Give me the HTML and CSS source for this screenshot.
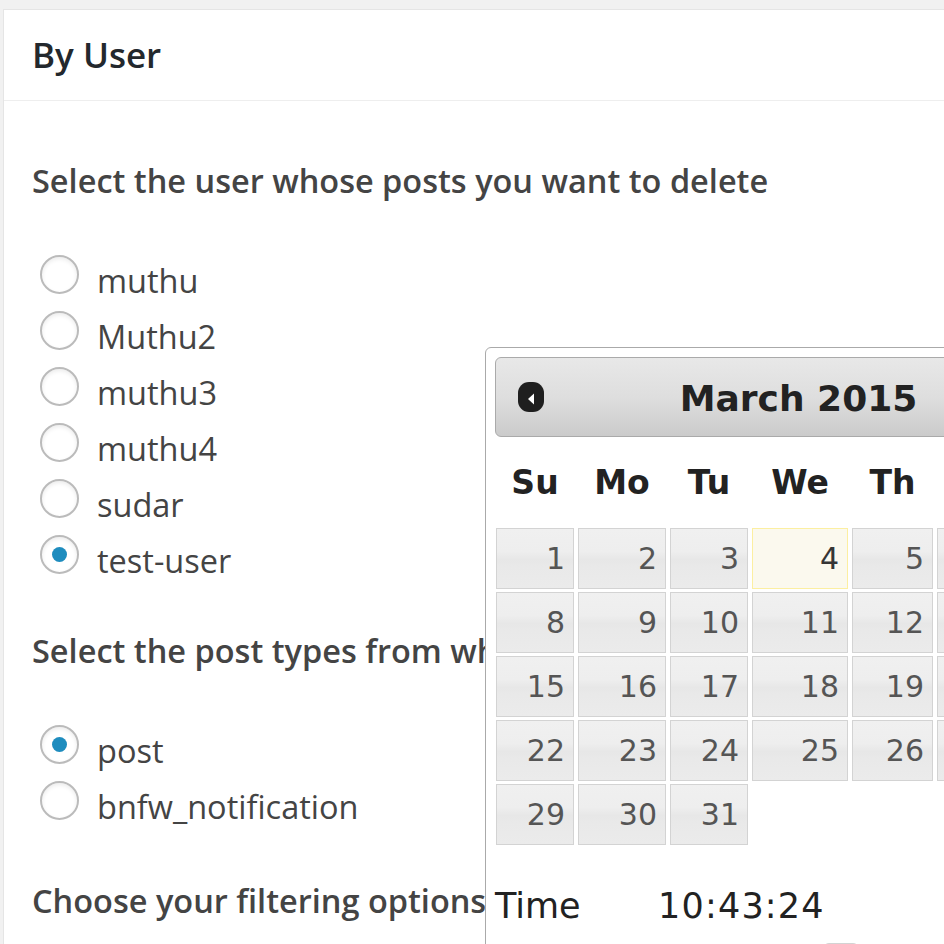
FILE: index.html
```html
<!DOCTYPE html>
<html lang="en">
<head>
<meta charset="UTF-8">
<title>Bulk Delete - By User</title>
<link rel="stylesheet" href="styles.css">
</head>
<body>

<div class="postbox">
  <h2 class="postbox-title">By User</h2>
  <div class="inside">
    <h4>Select the user whose posts you want to delete</h4>
    <div class="options">
      <label class="option"><input type="radio" name="user"> muthu</label>
      <label class="option"><input type="radio" name="user"> Muthu2</label>
      <label class="option"><input type="radio" name="user"> muthu3</label>
      <label class="option"><input type="radio" name="user"> muthu4</label>
      <label class="option"><input type="radio" name="user"> sudar</label>
      <label class="option"><input type="radio" name="user" checked> test-user</label>
    </div>

    <h4>Select the post types from which you want to delete posts</h4>
    <div class="options">
      <label class="option"><input type="radio" name="type" checked> post</label>
      <label class="option"><input type="radio" name="type"> bnfw_notification</label>
    </div>

    <h4>Choose your filtering options</h4>
  </div>
</div>

<!-- datepicker popup, open over the form -->
<div class="datepicker">
  <div class="dp-header">
    <a class="dp-prev" title="Prev">
      <svg width="28" height="32" viewBox="0 0 28 32">
        <rect x="1" y="1" width="26" height="30" rx="11" fill="#1f1f1f"/>
        <polygon points="11,18 17,12.5 17,23.5" fill="#fff"/>
      </svg>
    </a>
    <div class="dp-title">March 2015</div>
    <span></span>
  </div>

  <div class="dp-days">
    <span>Su</span><span>Mo</span><span>Tu</span><span>We</span><span>Th</span><span>Fr</span><span>Sa</span>
  </div>

  <div class="dp-grid">
    <a>1</a><a>2</a><a>3</a><a class="today">4</a><a>5</a><a>6</a><a>7</a>
    <a>8</a><a>9</a><a>10</a><a>11</a><a>12</a><a>13</a><a>14</a>
    <a>15</a><a>16</a><a>17</a><a>18</a><a>19</a><a>20</a><a>21</a>
    <a>22</a><a>23</a><a>24</a><a>25</a><a>26</a><a>27</a><a>28</a>
    <a>29</a><a>30</a><a>31</a>
  </div>

  <dl class="dp-time">
    <dt>Time</dt>
    <dd class="time-value">10:43:24</dd>
    <dt>Hour</dt>
    <dd><div class="slider"><span class="handle" style="left: 43.5%"></span></div></dd>
  </dl>
</div>

</body>
</html>
```

FILE: styles.css
```css
html, body {
  overflow: hidden;
}
body {
  margin: 0;
  background-color: #f1f1f1;
  font-family: "Open Sans", sans-serif;
  color: #444;
}
.postbox {
  margin: 9px 0 0 3px;
  width: 1200px;
  background-color: #fff;
  border: 1px solid #e5e5e5;
}
.postbox-title {
  margin: 0;
  padding: 23px 28px;
  font-size: 35px;
  line-height: 44px;
  font-weight: 600;
  color: #23282d;
  border-bottom: 1px solid #eee;
}
.inside {
  padding: 58px 28px 40px;
}
.inside h4 {
  margin: 0 0 49px;
  font-size: 32.5px;
  line-height: 44px;
  font-weight: 600;
  color: #444;
}
.options {
  margin-bottom: 41px;
}
.options:last-of-type {
  margin-bottom: 45px;
}
.option {
  display: flex;
  align-items: center;
  gap: 18px;
  height: 56px;
  padding-left: 8px;
  font-size: 32.5px;
  color: #444;
}
.option input {
  appearance: none;
  -webkit-appearance: none;
  margin: 0 0 12px;
  width: 39px;
  height: 39px;
  border: 2px solid #bbb;
  border-radius: 50%;
  background-color: #fff;
  box-shadow: inset 0 2px 4px rgba(0,0,0,0.08);
  display: flex;
  align-items: center;
  justify-content: center;
  flex-shrink: 0;
}
.option input:checked::before {
  content: "";
  width: 15px;
  height: 15px;
  border-radius: 50%;
  background-color: #1e8cbe;
}

/* datepicker */
.datepicker {
  position: absolute;
  left: 485px;
  top: 347px;
  width: 625px;
  height: 700px;
  padding: 9px;
  background-color: #fff;
  border: 1px solid #aaa;
  border-radius: 6px;
  font-family: "DejaVu Sans", Verdana, sans-serif;
  color: #222;
}
.dp-header {
  display: grid;
  grid-template-columns: 1fr auto 1fr;
  align-items: center;
  width: 605px;
  height: 78px;
  border: 1px solid #aaa;
  border-radius: 6px;
  background: linear-gradient(to bottom, #e8e8e8 0%, #dedede 50%, #cbcbcb 100%);
}
.dp-prev {
  display: block;
  margin-left: 21px;
  width: 28px;
  height: 32px;
  justify-self: start;
}
.dp-prev svg {
  display: block;
}
.dp-title {
  padding-top: 3px;
  font-size: 36px;
  font-weight: bold;
  color: #222;
}
.dp-days, .dp-grid {
  display: grid;
  grid-template-columns: 78px 88px 78px 96px 81px 80px 84px;
  column-gap: 4px;
  margin-left: 1px;
}
.dp-days span {
  height: 91px;
  line-height: 91px;
  text-align: center;
  font-size: 33px;
  font-weight: bold;
}
.dp-grid {
  row-gap: 3px;
}
.dp-grid a {
  height: 59px;
  line-height: 59px;
  padding-right: 8px;
  text-align: right;
  font-size: 30px;
  color: #555;
  border: 1px solid #d3d3d3;
  background: linear-gradient(to bottom, #f0f0f0 0%, #eeeeee 38%, #e7e7e7 52%, #e9e9e9 64%, #ebebeb 100%);
}
.dp-grid a.today {
  color: #363636;
  border-color: #fcefa1;
  background: #fbf9ee;
}
.dp-time {
  display: grid;
  grid-template-columns: 163px 1fr;
  margin: 39px 0 0;
  font-size: 35px;
  line-height: 44px;
  color: #222;
}
.dp-time dt, .dp-time dd {
  margin: 0;
}
.dp-time .time-value {
  letter-spacing: 1.2px;
}
.dp-time dt:nth-of-type(2) {
  visibility: hidden;
}
.slider {
  position: relative;
  width: 380px;
  height: 20px;
  margin-top: 22px;
  background-color: #fff;
  border: 1px solid #ddd;
  border-radius: 4px;
}
.handle {
  position: absolute;
  top: -8px;
  width: 34px;
  height: 34px;
  margin-left: -1px;
  border: 1px solid #d3d3d3;
  border-radius: 6px;
  background-color: #e6e6e6;
}
```
